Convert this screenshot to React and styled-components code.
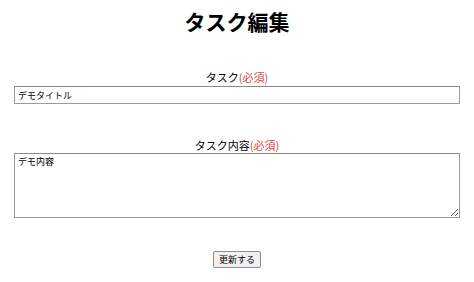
import styled, { createGlobalStyle } from "styled-components";

const GlobalStyle = createGlobalStyle`
  body {
    margin: 8px;
    background: #fff;
    color: #000;
    font-family: "Noto Sans CJK JP", "Noto Sans", sans-serif;
  }
`;

const Page = styled.div`
  display: flex;
  flex-direction: column;
  align-items: center;
  padding: 0 6px;
`;

const Title = styled.h1`
  margin: 0;
  font-size: 21px;
  line-height: 26px;
  font-weight: 700;
  text-align: center;
`;

const Field = styled.div`
  width: 100%;
  display: flex;
  flex-direction: column;
  align-items: center;
  margin-top: ${(p) => p.$top}px;
`;

const Label = styled.label`
  font-size: 11px;
  line-height: 14px;
  margin-bottom: ${(p) => p.$gap}px;
`;

const Required = styled.span`
  color: #e0443a;
`;

const TextInput = styled.input`
  box-sizing: border-box;
  width: 100%;
  height: 18px;
  margin: 0;
  padding: 0 3px;
  font-family: inherit;
  font-size: 9px;
  color: #000;
  border: 1px solid #9a9a9a;
  border-top-color: #8a8a8a;
  border-radius: 1px;
  outline: none;
`;

const TextArea = styled.textarea`
  box-sizing: border-box;
  width: 100%;
  height: 65px;
  margin: 0;
  padding: 2px 3px;
  font-family: inherit;
  font-size: 9px;
  line-height: 12px;
  color: #000;
  border: 1px solid #9a9a9a;
  border-top-color: #8a8a8a;
  border-radius: 1px;
  outline: none;
  resize: both;
`;

const Button = styled.button`
  margin-top: 33px;
  height: 17px;
  padding: 0 5px;
  font-family: inherit;
  font-size: 9px;
  line-height: 15px;
  color: #000;
  background: #f0f0f0;
  border: 1px solid #8f8f8f;
  border-radius: 2px;
`;

export default function App() {
  return (
    <>
      <GlobalStyle />
      <Page>
        <Title>タスク編集</Title>
        <Field $top={36}>
          <Label $gap={2}>
            タスク<Required>(必須)</Required>
          </Label>
          <TextInput type="text" defaultValue="デモタイトル" />
        </Field>
        <Field $top={34}>
          <Label $gap={1}>
            タスク内容<Required>(必須)</Required>
          </Label>
          <TextArea defaultValue="デモ内容" />
        </Field>
        <Button type="button">更新する</Button>
      </Page>
    </>
  );
}
